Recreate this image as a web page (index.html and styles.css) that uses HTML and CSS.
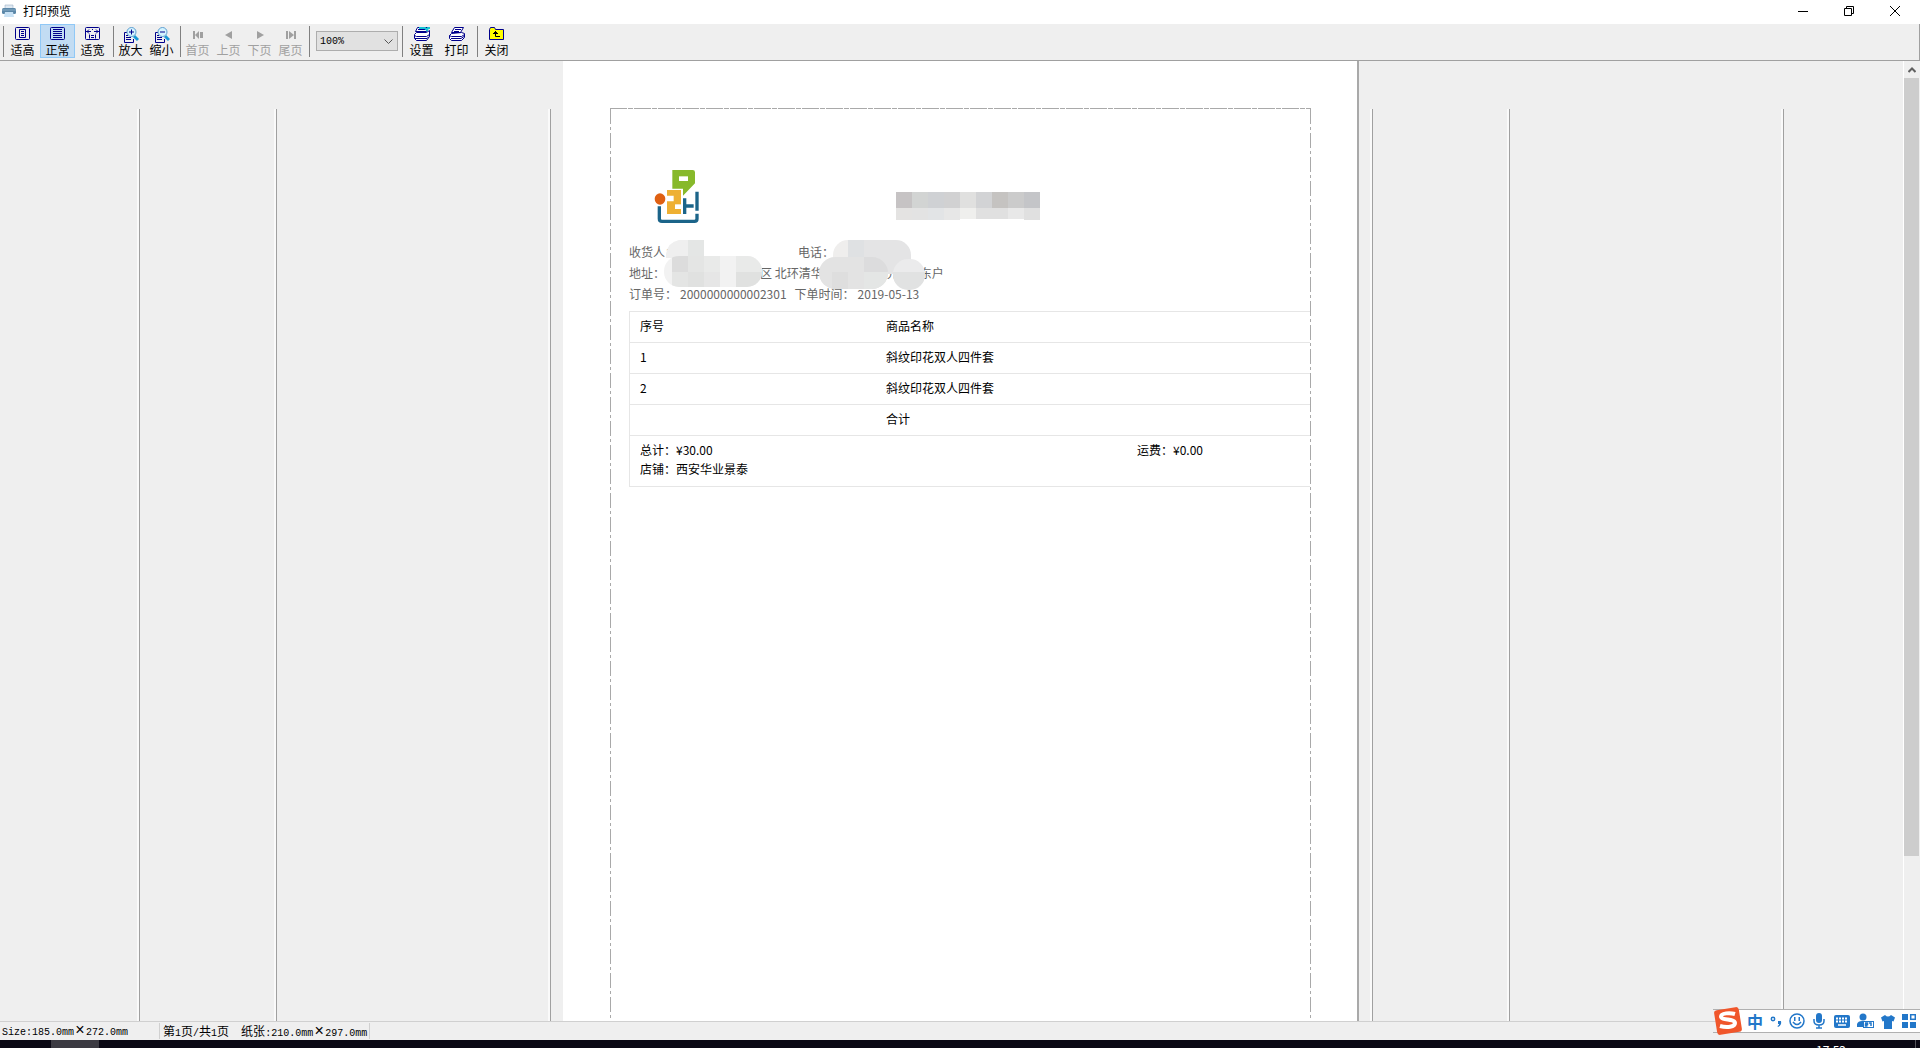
FILE: index.html
```html
<!DOCTYPE html>
<html lang="zh-CN">
<head>
    <meta charset="UTF-8">
    <meta name="viewport" content="width=device-width, initial-scale=1.0">
    <title>打印预览</title>
    <link rel="stylesheet" href="styles.css">
</head>
<body>
    <header class="titlebar">
        <svg class="app-icon" width="14" height="14" viewBox="0 0 14 14">
            <path d="M3 1h8v4H3z" fill="#dfe9f2" stroke="#9fb4c6" stroke-width=".6"/>
            <rect x="0" y="4" width="14" height="6" rx="1.5" fill="#5b87a8"/>
            <path d="M0 6h14" stroke="#86aac4"/>
            <path d="M3 8h8l1 5H2z" fill="#c9e2f5"/>
        </svg>
        <h1>打印预览</h1>
        <div class="window-buttons">
            <button aria-label="最小化"><svg width="10" height="10" viewBox="0 0 10 10"><path d="M0 5.5h10"/></svg></button>
            <button aria-label="还原"><svg width="10" height="10" viewBox="0 0 10 10"><path d="M.5 2.5h7v7h-7zM2.5 2.5v-2h7v7h-2"/></svg></button>
            <button aria-label="关闭窗口"><svg width="10" height="10" viewBox="0 0 10 10"><path d="M0 0l10 10M10 0L0 10"/></svg></button>
        </div>
    </header>

    <nav class="toolbar">
        <div class="group">
            <button><svg width="16" height="14" viewBox="0 0 16 14"><rect x=".5" y=".5" width="14" height="12" rx="1"/><path d="M4.5 2.5h6v8h-6zM6 4.500h3M6 6.500h3M6 8.500h3"/></svg>适高</button>
            <button class="active"><svg width="16" height="14" viewBox="0 0 16 14"><rect x=".5" y=".5" width="14" height="12" rx="1"/><path d="M3 2.5h9M3 4.5h9M3 6.5h9M3 8.5h9M3 10.5h9"/></svg>正常</button>
            <button><svg width="16" height="14" viewBox="0 0 16 14"><rect x=".5" y=".5" width="14" height="12" rx="1"/><path d="M1 4.5h5M9 4.5h5M4 2.500l-2 2 2 2M11 2.500l2 2-2 2M7 2.5h1M4.500 7.5v4M10.500 7.5v4M6 8.500h3M6 10.500h3"/></svg>适宽</button>
        </div>
        <div class="group narrow">
            <button><svg width="16" height="16" viewBox="0 0 16 16"><path d="M4 5.5H1.500v10h9V12M3 8.5h2M3 10.5h5M3 12.5h5"/><path class="handle" d="M11 9l4 4"/><circle class="lens" cx="8.500" cy="5" r="4.500"/><path d="M6 5h5M8.500 2.5v5"/></svg>放大</button>
            <button><svg width="16" height="16" viewBox="0 0 16 16"><path d="M4 5.5H1.500v10h9V12M3 8.5h2M3 10.5h5M3 12.5h5"/><path class="handle" d="M11 9l4 4"/><circle class="lens" cx="8.500" cy="5" r="4.500"/><path d="M6 5h5"/></svg>缩小</button>
        </div>
        <div class="group narrow">
            <button disabled><svg width="12" height="14" viewBox="0 0 12 14"><path class="arrow" d="M1 4h2v8H1zM3 8l4-4v8zM8 5h3v6H8z" /></svg>首页</button>
            <button disabled><svg width="12" height="14" viewBox="0 0 12 14"><path class="arrow" d="M2 8l7-4v8z"/></svg>上页</button>
            <button disabled><svg width="12" height="14" viewBox="0 0 12 14"><path class="arrow" d="M10 8L3 4v8z"/></svg>下页</button>
            <button disabled><svg width="12" height="14" viewBox="0 0 12 14"><path class="arrow" d="M11 4H9v8h2zM9 8L4 4v8zM1 4h2v8H1z"/></svg>尾页</button>
        </div>
        <div class="group zoom">
            <select aria-label="缩放比例">
                <option>100%</option>
                <option>75%</option>
                <option>50%</option>
            </select>
            <svg width="9" height="5" viewBox="0 0 9 5"><path d="M.5.5l4 4 4-4"/></svg>
        </div>
        <div class="group">
            <button><svg width="18" height="15" viewBox="0 0 18 15"><path class="paper" d="M4.500 .5h11l-2 4h-11zM3.500 5.500h10l3-2v6l-3 4h-10l-2-2v-4z"/><path d="M5 2.500h8M1.500 8.500l2 1h10l3-2M2 11.500h12l2-2"/><path class="pen" d="M6 1h6l2 2 1-2h2"/></svg>设置</button>
            <button><svg width="18" height="15" viewBox="0 0 18 15"><path class="paper" d="M6.500 .5h9l-3 5h-9zM3.500 6.500l-2 2v3l2 2h10l3-3v-4l-3-1z"/><path d="M1.500 8.500l2 1h10l3-2M3 11.500h10l3-2M7 2.500h6M6 4.500h5"/></svg>打印</button>
        </div>
        <div class="group">
            <button><svg width="16" height="14" viewBox="0 0 16 14"><path class="folder" d="M.5 12.500v-10l1-2h4l1 2h8v10z"/><path class="up" d="M4 6.500h5M6.500 4v5.500H11M5 5.500h3"/></svg>关闭</button>
        </div>
    </nav>

    <main class="workspace">
        <div class="canvas">
            <div class="side side-left"><span></span><span></span><span></span></div>
            <article class="sheet">
                <div class="print-area">
                    <div class="doc-head">
                        <svg class="logo" width="46" height="54" viewBox="162 237 138 162">
                            <path fill="#87b92b" d="M217 240h61q7 0 7 7v33l-36 37v-21h-32z"/>
                            <path fill="#fff" d="M237 259h27v14h-27z"/>
                            <path fill="#eeb033" d="M201 300h42v72h-42v-38h20v-17h-20z"/>
                            <path fill="#fff" d="M225 343h18v14h-18z"/>
                            <ellipse cx="180" cy="327" rx="16" ry="17" fill="#df6012"/>
                            <path fill="none" stroke="#1b6489" stroke-width="10" d="M178 349v37q0 8 8 8h97q8 0 8-8v-15M291 305v57M254 325v47M254 348h27"/>
                        </svg>
                        <svg class="company" width="144" height="29" viewBox="0 0 144 29">
                            <g id="companyCells"></g>
                        </svg>
                    </div>

                    <section class="info">
                        <p><span class="name">收货人：</span>电话：</p>
                        <p>地址：<span class="hidden-street"></span>区 北环清华<span class="hidden-estate"></span>元<span class="hidden-unit"></span>东户</p>
                        <p>订单号：<span class="value">2000000000002301</span>下单时间：<span class="value">2019-05-13</span></p>
                        <svg class="mask" width="300" height="52" viewBox="0 0 300 52">
                            <clipPath id="phone"><rect x="204" y="0" width="78" height="34" rx="15"/></clipPath>
                            <clipPath id="name"><path d="M75 0v18H37V14Q39 2 50 0z"/></clipPath>
                            <clipPath id="street"><rect x="35" y="16" width="98" height="31" rx="15"/></clipPath>
                            <clipPath id="estate"><rect x="190" y="17" width="69" height="32" rx="16"/></clipPath>
                            <clipPath id="unit"><rect x="264" y="19" width="32" height="31" rx="15"/></clipPath>
                            <g clip-path="url(#name)"><path fill="#efefef" d="M35 0h24v18H35z"/><path fill="#e4e6e5" d="M59 0h16v18H59z"/></g>
                            <g clip-path="url(#street)">
                                <path fill="#f2f2f2" d="M35 16h98v31H35z"/>
                                <path fill="#dcdcdc" d="M43 16h16v16H43z"/><path fill="#e4e5e4" d="M59 16h16v16H59zM43 32h16v15H43z"/>
                                <path fill="#e9eae9" d="M75 16h16v16H75zM107 16h26v16h-26z"/><path fill="#e0e1e0" d="M59 32h16v15H59zM107 32h26v15h-26z"/>
                                <path fill="#e6e6e6" d="M75 32h16v15H75z"/>
                            </g>
                            <g clip-path="url(#phone)"><path fill="#efeeed" d="M204 0h15v34h-15z"/><path fill="#dfe1e3" d="M219 0h16v34h-16z"/><path fill="#e4e4e5" d="M235 0h47v34h-47z"/></g>
                            <g clip-path="url(#estate)">
                                <path fill="#e3e3e3" d="M190 17h69v32h-69z"/><path fill="#dcdcdd" d="M235 17h24v15h-24z"/>
                                <path fill="#dedede" d="M203 32h16v17h-16z"/><path fill="#e4e6e5" d="M235 32h24v17h-24z"/>
                            </g>
                            <g clip-path="url(#unit)"><path fill="#ebebec" d="M264 19h32v13h-32z"/><path fill="#e1e2e2" d="M264 32h32v18h-32z"/></g>
                        </svg>
                    </section>

                    <table class="order">
                        <thead>
                            <tr><th class="no">序号</th><th>商品名称</th></tr>
                        </thead>
                        <tbody>
                            <tr><td>1</td><td>斜纹印花双人四件套</td></tr>
                            <tr><td>2</td><td>斜纹印花双人四件套</td></tr>
                            <tr><td></td><td>合计</td></tr>
                        </tbody>
                    </table>
                    <div class="summary">
                        <span>总计：¥30.00</span>
                        <span>运费：¥0.00</span>
                        <span>店铺：西安华业景泰</span>
                    </div>
                </div>
            </article>
            <div class="side side-right"><span></span><span></span><span></span></div>
        </div>
        <div class="scrollbar">
            <button aria-label="向上滚动"><svg width="8" height="6" viewBox="0 0 8 6"><path d="M.5 5L4 1.500 7.500 5"/></svg></button>
            <div class="thumb"></div>
        </div>
    </main>

    <footer class="statusbar">
        <div class="cell size"><span>Size:185.0mm<i>×</i>272.0mm</span></div>
        <div class="cell pages"><span><b>第</b>1<b>页</b>/<b>共</b>1<b>页</b></span><span><b>纸张</b>:210.0mm<i>×</i>297.0mm</span></div>
    </footer>

    <div class="taskbar">
        <div class="task"></div>
        <time>17:52</time>
        <div class="show-desktop"></div>
    </div>

    <!-- input method bar -->
    <div class="ime">
        <svg class="sogou" width="30" height="30" viewBox="0 0 30 30">
            <rect x="2.500" y="2.500" width="25" height="25" rx="3" fill="#f0562b" transform="rotate(-9 15 15)"/>
            <path d="M22 8c-5-1.500-14-1-14 2.500 0 4 14 2 14 6.500 0 4-8 5-15 3" fill="none" stroke="#fff" stroke-width="4"/>
        </svg>
        <button class="lang">中</button>
        <button aria-label="标点"><svg width="12" height="16" viewBox="0 0 12 16"><circle cx="3" cy="6" r="1.700" class="line"/><path d="M8 8h3q1 4-3 6l-.5-1q2-1 1.500-2H8z"/></svg></button>
        <button aria-label="表情"><svg width="16" height="16" viewBox="0 0 16 16"><circle cx="8" cy="8" r="7" class="line"/><path d="M5 4h1.500v4H5zM9.500 4H11v4H9.500z"/><path class="line" d="M4 9q4 5 8 0"/></svg></button>
        <button aria-label="语音"><svg width="14" height="16" viewBox="0 0 14 16"><rect x="4" y="0" width="6" height="10" rx="3"/><path class="line" d="M2 6v2q0 4 5 4t5-4V6M7 12v3M4 15h6"/></svg></button>
        <button aria-label="软键盘"><svg width="16" height="13" viewBox="0 0 16 13"><rect width="16" height="13" rx="2"/><path stroke="#fff" stroke-width="2" stroke-dasharray="2 1" d="M2 3.500h12M2 6.500h12"/><path stroke="#fff" stroke-width="1.500" d="M4 10h8"/></svg></button>
        <button aria-label="用户"><svg width="17" height="16" viewBox="0 0 17 16"><circle cx="6" cy="4" r="3.500"/><path d="M0 14V11q1-3 5-3h3q4 0 4 4v2z"/><rect x="6.500" y="8.500" width="10" height="6" fill="#fff" stroke="#2277c9"/><path class="line" d="M8 10h2.500v1.500H8.500V13h2M12 10h2v3"/></svg></button>
        <button aria-label="皮肤"><svg width="14" height="15" viewBox="0 0 14 15"><path d="M4 1q3 3 6 0l4 2.500-1.500 4L11 7v8H3V7l-1.500.5L0 3.500z"/></svg></button>
        <button aria-label="工具箱"><svg width="14" height="14" viewBox="0 0 14 14"><path d="M0 0h6v6H0zM0 8h6v6H0zM8 8h6v6H8z"/><rect x="8.700" y=".7" width="4.600" height="4.600" class="line"/></svg></button>
    </div>

    <script>
        // pixelated company name
        const rows = [
            ['#c6c3c4', '#d2d4d3', '#cfd1d4', '#d1d1d2', '#e0e0df', '#d2d3d5', '#c5c3c1', '#cbcbcb', '#c4c5c8'],
            ['#e4e3e2', '#e3e3e3', '#e2e4e6', '#e7e7e7', '#efefed', '#e0e0e0', '#e0e0e0', '#e8e8e8', '#e0e0e0']
        ];
        const group = document.getElementById('companyCells');
        rows.forEach((row, y) => row.forEach((color, x) => {
            const cell = document.createElementNS('http://www.w3.org/2000/svg', 'rect');
            cell.setAttribute('x', x * 16);
            cell.setAttribute('y', y * 16);
            cell.setAttribute('width', 16);
            cell.setAttribute('height', y ? (x > 3 && x < 8 ? 11 : 12) : 16);
            cell.setAttribute('fill', color);
            group.appendChild(cell);
        }));
    </script>
</body>
</html>
```
FILE: styles.css
```css
* {
    box-sizing: border-box;
}
body {
    margin: 0;
    height: 100vh;
    display: flex;
    flex-direction: column;
    overflow: hidden;
    background: #efefef;
    color: #000;
    font: 12px/16px "Noto Sans CJK SC", sans-serif;
}
button {
    padding: 0;
    border: 0;
    background: none;
    color: inherit;
    font: inherit;
}
h1, p {
    margin: 0;
    font-size: 12px;
    font-weight: normal;
}

/* title bar */
.titlebar {
    flex: none;
    height: 24px;
    display: flex;
    align-items: center;
    padding: 0 2px 2px;
    background: #fff;
}
.app-icon {
    margin-right: 7px;
}
.window-buttons {
    margin-left: auto;
    display: flex;
}
.window-buttons button {
    width: 46px;
    height: 22px;
    display: grid;
    place-items: center;
}
.window-buttons path {
    fill: none;
    stroke: #000;
}

/* toolbar */
.toolbar {
    flex: none;
    height: 37px;
    display: flex;
    padding-left: 3px;
    border-bottom: 1px solid #a0a0a0;
    border-right: 1px solid #a0a0a0;
}
.group {
    position: relative;
    display: flex;
    padding: 0 3px 0 2px;
}
.group::before {
    content: "";
    position: absolute;
    left: 0;
    top: 2px;
    height: 31px;
    border-left: 1px solid #808080;
}
.group button {
    width: 35px;
    height: 34px;
    display: flex;
    flex-direction: column;
    align-items: center;
    justify-content: space-between;
    padding: 3px 0 1px;
    line-height: 15px;
}
.group.narrow button {
    width: 31px;
}
.group button.active {
    background: #c2dcf3;
    border: 1px solid #90c8f6;
    padding: 2px 0 0;
}
.group button:disabled {
    color: #a0a0a0;
}
.group button svg {
    flex: none;
    margin-bottom: -2px;
    fill: none;
    stroke: #00008b;
}
.group .handle {
    stroke: #1b9ad6;
    stroke-width: 3;
}
.group .lens {
    fill: #d4f4ff;
    stroke: #5f9ed0;
}
.group .paper {
    fill: #fff;
}
.group .pen {
    stroke: #18c4d4;
    stroke-width: 2;
}
.group .folder {
    fill: #ff0;
}
.group .up {
    stroke: #000;
}
.group .arrow {
    fill: #a0a0a0;
    stroke: none;
}
.zoom {
    padding: 7px 4px 0 7px;
}
.zoom select {
    width: 82px;
    height: 20px;
    padding: 0 3px;
    appearance: none;
    border: 1px solid #adadad;
    border-radius: 0;
    background: #e1e1e1;
    color: #000;
    font: 10px "Liberation Mono", monospace;
}
.zoom svg {
    position: absolute;
    right: 9px;
    top: 15px;
    fill: none;
    stroke: #555;
}

/* preview */
.workspace {
    flex: 1;
    min-height: 0;
    display: flex;
}
.canvas {
    flex: 1;
    display: flex;
    overflow: hidden;
}
.side {
    display: grid;
    margin-top: 48px;
}
.side-left {
    flex: 563;
    grid-template-columns: 140fr 137fr 274fr 12fr;
}
.side-right {
    flex: 544;
    grid-template-columns: 14fr 137fr 274fr 119fr;
}
.side span {
    border-right: 1px solid #a0a0a0;
    box-shadow: inset -2px 0 #fafafa;
}
.sheet {
    flex: none;
    width: 796px;
    height: 297mm;
    padding: 47px;
    background: #fff;
    border-right: 2px solid #a9a9a9;
}
.print-area {
    --dash-v: repeating-linear-gradient(#a9a9a9 0 15px, #fff 15px 18px, #a9a9a9 18px 21px, #fff 21px 24px);
    --dash-h: repeating-linear-gradient(90deg, #a9a9a9 0 17px, #fff 17px 18px, #a9a9a9 18px 23px, #fff 23px 24px);
    width: 701px;
    height: 100%;
    padding: 61px 1px 0 19px;
    background: var(--dash-h) 0 0 / 100% 1px no-repeat, var(--dash-v) 0 1px / 1px 100% no-repeat, var(--dash-v) 100% 1px / 1px 100% no-repeat;
}
.doc-head {
    display: flex;
    height: 72px;
    padding-left: 25px;
}
.company {
    margin: 23px 0 0 196px;
}
.info {
    position: relative;
    color: #666;
    line-height: 21px;
    white-space: nowrap;
}
.info span {
    display: inline-block;
}
.info .name {
    width: 169px;
}
.info .hidden-street {
    width: 95px;
}
.info .hidden-estate {
    width: 64px;
}
.info .hidden-unit {
    width: 21px;
}
.info .value {
    margin: 0 8px 0 3px;
}
.mask {
    position: absolute;
    left: 0;
    top: -1px;
}
.order {
    width: 100%;
    margin-top: 7px;
    table-layout: fixed;
    border-spacing: 0;
    border-left: 1px solid #e6e6e6;
}
.order th,
.order td {
    height: 31px;
    padding: 0 10px 2px;
    border-top: 1px solid #e6e6e6;
    text-align: left;
    font-weight: normal;
}
.order .no {
    width: 246px;
}
.summary {
    display: grid;
    grid-template-columns: 497px 1fr;
    padding: 4px 10px 8px;
    border: 1px solid #e6e6e6;
    border-right: 0;
    line-height: 19px;
}

/* scrollbar */
.scrollbar {
    width: 17px;
    border-left: 1px solid #fff;
}
.scrollbar button {
    width: 16px;
    height: 17px;
    display: grid;
    place-items: center;
}
.scrollbar path {
    fill: none;
    stroke: #606060;
    stroke-width: 2;
}
.thumb {
    width: 15px;
    height: 81%;
    background: #cdcdcd;
}

/* status bar */
.statusbar {
    flex: none;
    height: 19px;
    display: flex;
    padding: 1px 0;
    border-top: 1px solid #d0d0d0;
    font: 10px/16px "Liberation Mono", monospace;
}
.statusbar b {
    font: 12px/16px "Noto Sans CJK SC", sans-serif;
}
.statusbar i {
    display: inline-block;
    width: 12px;
    text-align: center;
    font: 16px/14px "Liberation Sans", sans-serif;
}
.cell {
    display: flex;
    gap: 12px;
    white-space: nowrap;
    border-right: 1px solid #d0d0d0;
}
.size {
    width: 160px;
    padding-left: 2px;
}
.pages {
    padding: 0 2px 0 3px;
}

.taskbar {
    flex: none;
    height: 8px;
    display: flex;
    overflow: hidden;
    background: #0a0814;
    color: #fff;
}
.task {
    width: 48px;
    margin-left: 51px;
    background: #3b3a42;
}
.taskbar time {
    margin: 2px 69px 0 auto;
}
.show-desktop {
    width: 5px;
    border-left: 1px solid #55545c;
}

.ime {
    position: fixed;
    right: 0;
    bottom: 15px;
    height: 24px;
    display: flex;
    align-items: center;
    justify-content: space-between;
    width: 207px;
    padding: 0 4px 0 34px;
    background: linear-gradient(#fff, #fff) 14px 0 no-repeat;
    border-top: 1px solid #b0b0b0;
    border-bottom: 1px solid #b0b0b0;
}
.ime .sogou {
    position: absolute;
    left: 0;
    top: -4px;
}
.ime button {
    display: grid;
    place-items: center;
    color: #2277c9;
}
.ime button svg {
    fill: #2277c9;
}
.ime .line {
    fill: none;
    stroke: #2277c9;
    stroke-width: 1.5;
}
.ime .lang {
    font-size: 16px;
    font-weight: bold;
}
```
